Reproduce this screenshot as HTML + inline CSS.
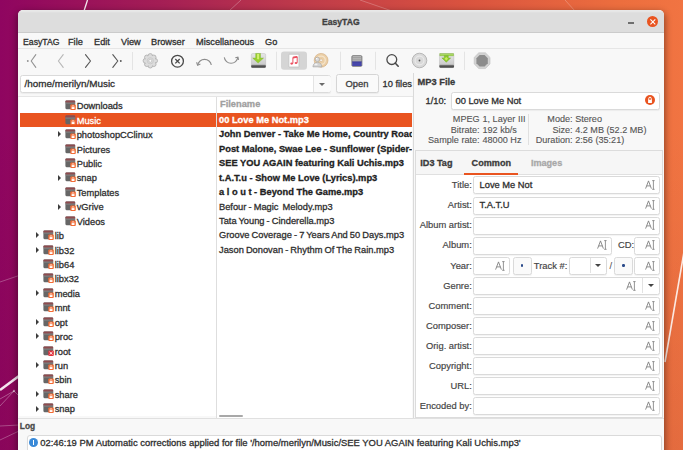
<!DOCTYPE html><html><head><meta charset="utf-8"><style>*{box-sizing:border-box;margin:0;padding:0}
html,body{width:683px;height:450px;overflow:hidden}
body{position:relative;font-family:"Liberation Sans",sans-serif;font-size:9.3px;color:#2f2f2f;-webkit-text-stroke:0.3px currentColor;
background:linear-gradient(180deg,rgba(0,0,0,0) 0,rgba(0,0,0,0) 120px,rgba(60,0,20,.07) 450px),linear-gradient(90deg,#8f0560 0px,#a41e55 160px,#be3a4a 300px,#d9523f 460px,#ec6e3e 620px,#f17442 683px)}
.a{position:absolute}
.t{position:absolute;white-space:pre;line-height:12px}
#win{left:18px;top:10px;width:646px;height:460px;background:#f8f8f8;border-radius:5px 5px 0 0;box-shadow:0 3px 7px 1px rgba(0,0,0,.42)}
#title{left:18px;top:10px;width:646px;height:23px;background:linear-gradient(#e9e9e9 0,#e6e6e6 1.5px,#dddddd 3px,#dddddd 100%);border-radius:5px 5px 0 0;border-bottom:1px solid #cbcbcb}
#menu{left:18px;top:33px;width:646px;height:16px;background:#f8f8f8;border-bottom:1px solid #e6e6e6}
.white{background:#fff}
.b{font-weight:bold;font-size:9.3px;color:#222}
.fl{word-spacing:-0.5px}
.fl.b{word-spacing:0}
.sel{background:#e95420}
.tri{width:0;height:0;border-left:3px solid #3c3c3c;border-top:3px solid transparent;border-bottom:3px solid transparent}
.entry{position:absolute;background:#fff;border:1px solid #dadada;border-radius:2.5px;box-shadow:0 1px 1px rgba(0,0,0,.05)}
.sep{position:absolute;width:1px;background:#dcdcdc}
.lbl{position:absolute;white-space:pre;line-height:12px;text-align:right}
.ai{position:absolute;font-family:"Liberation Serif",serif;font-size:9px;color:#777;line-height:10px;white-space:pre}
</style></head><body>
<svg width="0" height="0" style="position:absolute">
<defs>
<symbol id="fold" viewBox="0 0 11 10">
<rect x="0.4" y="0.6" width="9.8" height="8.6" rx="1.1" fill="#666"/>
<rect x="0.4" y="0.6" width="9.8" height="2.1" rx="1" fill="#8e4b4e"/>
<rect x="0.4" y="2.6" width="9.8" height="0.9" fill="#8a8a8a"/>
<rect x="5.3" y="4.6" width="5.5" height="5.3" rx="1" fill="#f36c35"/>
<rect x="6.6" y="7.1" width="2.9" height="1.9" fill="#fff"/>
<path d="M7.2 7.1 V6.4 a0.85 0.85 0 0 1 1.7 0 V7.1" stroke="#fff" stroke-width="0.6" fill="none"/>
</symbol>
<linearGradient id="dg" x1="0" y1="0" x2="0" y2="1"><stop offset="0" stop-color="#e6e6e6"/><stop offset="1" stop-color="#c4c4c4"/></linearGradient>
<symbol id="foldx" viewBox="0 0 11 10">
<rect x="0.4" y="0.6" width="9.8" height="8.6" rx="1.1" fill="#666"/>
<rect x="0.4" y="0.6" width="9.8" height="2.1" rx="1" fill="#8e4b4e"/>
<rect x="0.4" y="2.6" width="9.8" height="0.9" fill="#8a8a8a"/>
<rect x="5.3" y="4.6" width="5.5" height="5.3" rx="1" fill="#e0303c"/>
<path d="M6.6 5.9 L9.5 8.6 M9.5 5.9 L6.6 8.6" stroke="#fff" stroke-width="0.9"/>
</symbol>
<symbol id="drive" viewBox="0 0 16 16">
<rect x="0.7" y="1" width="14.6" height="14.2" rx="1.6" fill="url(#dg)" stroke="#b4b4b4" stroke-width="0.4"/>
<rect x="0.7" y="12.4" width="14.6" height="2.8" rx="1" fill="#505050"/>
<rect x="1.2" y="12.2" width="13.6" height="0.7" fill="#9a9a9a"/>
<path d="M5.2 0.9 H10 V5.6 H13 L7.6 10.6 L2.2 5.6 H5.2 Z" fill="#98d030" stroke="#78b028" stroke-width="0.4"/>
<path d="M6.6 1.6 H8.6 V6 L7.6 7.2 L6.6 6 Z" fill="#d4f070"/>
</symbol>
<symbol id="drive2" viewBox="0 0 16 16">
<rect x="0.7" y="1" width="14.6" height="14.2" rx="1.6" fill="url(#dg)" stroke="#b4b4b4" stroke-width="0.4"/>
<rect x="0.7" y="12.4" width="14.6" height="2.8" rx="1" fill="#505050"/>
<rect x="1.2" y="12.2" width="13.6" height="0.7" fill="#9a9a9a"/>
<rect x="1.2" y="1.2" width="13.6" height="2.2" fill="#a8d860" stroke="#7ab030" stroke-width="0.4"/>
<path d="M5.6 3.2 H9.6 V5.4 H12 L7.6 9.8 L3.2 5.4 H5.6 Z" fill="#8fcb2c" stroke="#6aa820" stroke-width="0.4"/>
<path d="M7.6 4.4 L9.4 6.2 L7.6 8 L5.8 6.2 Z" fill="#c8ec5a"/>
</symbol>
<symbol id="ai" viewBox="0 0 11 10">
<path d="M0.6 8.6 L3.5 0.9 L6.4 8.6 M1.7 5.9 H5.3" stroke="#7a7a7a" stroke-width="0.85" fill="none"/>
<path d="M8.4 0.6 V9.3 M7.2 0.6 H9.6 M7.2 9.3 H9.6" stroke="#7a7a7a" stroke-width="0.8" fill="none"/>
</symbol>
</defs></svg>
<svg class="a" style="left:0;top:0" width="683" height="450">
<g stroke="#fff" fill="none">
<path d="M87.5 0 L84 11" stroke-width="1.3" opacity=".9"/>
<path d="M241 0 L229 11" stroke-width="0.8" opacity=".35"/>
<path d="M360 0 L392 11" stroke-width="0.8" opacity=".3"/>
<path d="M565 0 L575 11" stroke-width="0.8" opacity=".3"/>
<path d="M0 390 L19 376" stroke-width="2.6" opacity=".9"/>
<path d="M0 399 L14 391 L0 406" stroke-width="0.8" opacity=".4"/>
<path d="M14 391 L19 396" stroke-width="0.8" opacity=".4"/>
<path d="M0 426 L19 425" stroke-width="0.8" opacity=".35"/>
<path d="M0 440 L19 431" stroke-width="0.8" opacity=".35"/>
<path d="M0 282 L19 275.5" stroke-width="0.9" opacity=".3"/>
<path d="M684 252 L665 362" stroke-width="1.6" opacity=".85"/>
</g>
<circle cx="14" cy="391" r="1.2" fill="#fff" opacity=".5"/>
</svg>
<div class="a" id="win"></div>
<div class="a" id="title"></div>
<div class="t b" style="left:322px;top:16px;font-size:8.6px;color:#404040">EasyTAG</div>
<div class="a" style="left:628.2px;top:22.4px;width:5.4px;height:1.3px;background:#6e6e6e"></div>
<div class="a" style="left:646.5px;top:15.5px;width:11.5px;height:11.5px;border-radius:50%;background:#e95420"></div>
<svg class="a" style="left:646.5px;top:15.5px" width="12" height="12"><path d="M3.4 3.4 L8.3 8.3 M8.3 3.4 L3.4 8.3" stroke="#fff" stroke-width="1.05"/></svg>
<div class="a" id="menu"></div>
<div class="t" style="left:23px;top:35.5px;font-size:8.7px">EasyTAG</div>
<div class="t" style="left:68px;top:35.5px;font-size:9.2px">File</div>
<div class="t" style="left:94px;top:35.5px;font-size:9.2px">Edit</div>
<div class="t" style="left:121px;top:35.5px;font-size:9.2px">View</div>
<div class="t" style="left:151px;top:35.5px;font-size:9.2px">Browser</div>
<div class="t" style="left:196px;top:35.5px;font-size:9.2px">Miscellaneous</div>
<div class="t" style="left:265px;top:35.5px;font-size:9.2px">Go</div>

<!-- toolbar -->
<svg class="a" style="left:0;top:0" width="683" height="80">
 <g fill="none" stroke-linecap="round" stroke-linejoin="round">
  <circle cx="27.8" cy="61" r="0.95" fill="#939393" stroke="none"/>
  <path d="M35.8 54.6 L31.2 61 L35.8 67.4" stroke="#939393" stroke-width="1.1"/>
  <path d="M63.2 54.6 L58.4 61 L63.2 67.4" stroke="#b8b8b8" stroke-width="1.15"/>
  <path d="M85.5 54.6 L90.5 61 L85.5 67.4" stroke="#585858" stroke-width="1.15"/>
  <path d="M112.8 54.6 L117.8 61 L112.8 67.4" stroke="#585858" stroke-width="1.15"/>
  <circle cx="120.8" cy="61" r="0.95" fill="#585858" stroke="none"/>
 </g>
 <rect x="132" y="52" width="1" height="18" fill="#e4e4e4"/>
 <g fill="#dcdcdc" stroke="#b2b2b2" stroke-width="0.9"><circle cx="155.20" cy="60.80" r="2.3"/><circle cx="153.76" cy="64.26" r="2.3"/><circle cx="150.30" cy="65.70" r="2.3"/><circle cx="146.84" cy="64.26" r="2.3"/><circle cx="145.40" cy="60.80" r="2.3"/><circle cx="146.84" cy="57.34" r="2.3"/><circle cx="150.30" cy="55.90" r="2.3"/><circle cx="153.76" cy="57.34" r="2.3"/></g>
 <circle cx="150.3" cy="60.8" r="5.1" fill="#dcdcdc"/>
 <circle cx="150.3" cy="60.8" r="3.1" fill="none" stroke="#c6c6c6" stroke-width="0.8"/>
 <circle cx="150.3" cy="60.8" r="1.5" fill="#fbfbfb" stroke="#b2b2b2" stroke-width="0.6"/>
 <circle cx="177.5" cy="61.2" r="5.9" fill="none" stroke="#4a4a4a" stroke-width="1.3"/>
 <path d="M175.3 59 L179.7 63.4 M179.7 59 L175.3 63.4" stroke="#4a4a4a" stroke-width="1.3"/>
 <path d="M197.8 65 A6.8 6.4 0 0 1 211.3 65" fill="none" stroke="#8c8c8c" stroke-width="1.1"/>
 <path d="M196.6 62.3 L197.6 65.2 L200.4 64" fill="none" stroke="#8c8c8c" stroke-width="1.1"/>
 <path d="M224.3 57.4 A6.8 6.6 0 0 0 237.8 57.4" fill="none" stroke="#8c8c8c" stroke-width="1.1"/>
 <path d="M235.3 57.8 L237.9 57.1 L238.6 59.9" fill="none" stroke="#8c8c8c" stroke-width="1.1"/>
 <svg x="250.5" y="52.5" width="16" height="16" viewBox="0 0 16 16"><use href="#drive"/></svg>
 <rect x="276" y="51.7" width="1" height="18.3" fill="#e4e4e4"/>
 <rect x="281" y="51.6" width="26" height="18.2" rx="3" fill="#d5d5d5"/>
 <rect x="288.8" y="54.2" width="10.2" height="12.9" rx="0.6" fill="#fff" stroke="#d0d0d0" stroke-width="0.5"/>
 <path d="M292.9 63.4 V57.5 L297.2 56.8 V62.8" fill="none" stroke="#ea5060" stroke-width="1"/>
 <path d="M292.9 57.6 L297.2 56.9" stroke="#ea5060" stroke-width="1.6"/>
 <ellipse cx="291.7" cy="63.6" rx="1.4" ry="1.1" fill="#ea5060"/>
 <ellipse cx="296" cy="63" rx="1.4" ry="1.1" fill="#ea5060"/>
 <circle cx="321.1" cy="60.3" r="6.9" fill="#ebcfa6" stroke="#d2aa7c" stroke-width="0.6"/>
 <circle cx="321.1" cy="60.3" r="4.2" fill="none" stroke="#f5e4cc" stroke-width="1.3"/>
 <circle cx="321.1" cy="60.3" r="1.3" fill="#f6f6f6" stroke="#c9a070" stroke-width="0.4"/>
 <circle cx="317.4" cy="59.4" r="2.2" fill="#dadada" stroke="#9c9c9c" stroke-width="0.55"/>
 <path d="M312.9 66.9 Q313.1 62.7 317.4 62.4 Q321.7 62.7 321.9 66.9 Z" fill="#d2d2d2" stroke="#9c9c9c" stroke-width="0.55"/>
 <ellipse cx="316.6" cy="58.7" rx="0.8" ry="0.6" fill="#fff"/>
 <ellipse cx="316" cy="64.4" rx="1.6" ry="0.9" fill="#f2f2f2"/>
 <rect x="288.8" y="54.2" width="10.2" height="12.9" rx="0.6" fill="none" stroke="#bdbdbd" stroke-width="0.6"/>
 <rect x="340" y="51.7" width="1" height="18.3" fill="#e4e4e4"/>
 <rect x="351.9" y="55.7" width="10" height="10.6" rx="1" fill="#c4c4c4" stroke="#4e4e4e" stroke-width="0.7"/>
 <rect x="352.3" y="57.4" width="9.2" height="0.9" fill="#8a8a8a"/>
 <rect x="352.3" y="59.5" width="9.2" height="0.9" fill="#8a8a8a"/>
 <rect x="352.2" y="61.6" width="9.4" height="4.4" fill="#4646aa"/>
 <rect x="352.2" y="61.6" width="9.4" height="0.6" fill="#2e2e80"/>
 <rect x="375" y="51.8" width="1" height="18" fill="#e4e4e4"/>
 <circle cx="391.8" cy="59.6" r="4.9" fill="none" stroke="#4a4a4a" stroke-width="1.3"/>
 <path d="M395.4 63.2 L398.2 66.2" stroke="#4a4a4a" stroke-width="1.6" stroke-linecap="round"/>
 <circle cx="419.5" cy="60.5" r="7.3" fill="#d9d9d9" stroke="#a9a9a9" stroke-width="0.8"/>
 <circle cx="419.5" cy="60.5" r="4.4" fill="none" stroke="#e9e9e9" stroke-width="1.2"/>
 <circle cx="419.5" cy="60.5" r="0.9" fill="#555"/>
 <svg x="438.7" y="52.5" width="16" height="16" viewBox="0 0 16 16"><use href="#drive2"/></svg>
 <rect x="464" y="51.7" width="1" height="18.3" fill="#e4e4e4"/>
 <path d="M478.8 52.8 H485.4 L490 57.4 V64 L485.4 68.6 H478.8 L474.2 64 V57.4 Z" fill="#d2d2d2" stroke="#bdbdbd" stroke-width="0.6"/>
 <path d="M479.6 55 H484.6 L487.8 58.2 V63.2 L484.6 66.4 H479.6 L476.4 63.2 V58.2 Z" fill="#8c8c8c"/>
</svg>
<!-- path row -->
<div class="entry" style="left:20px;top:74.5px;width:311px;height:18px;border-radius:2.5px"></div>
<div class="a" style="left:312.5px;top:75.5px;width:18px;height:16px;background:#fafafa;border-left:1px solid #e4e4e4;border-radius:0 2px 2px 0"></div>
<div class="a" style="left:319px;top:82.5px;width:0;height:0;border-top:3px solid #6a6a6a;border-left:3px solid transparent;border-right:3px solid transparent"></div>
<div class="t" style="left:24.5px;top:77.5px;font-size:9.9px">/home/merilyn/Music</div>
<div class="entry" style="left:335.5px;top:74px;width:43px;height:18.5px;background:#fafafa;border-color:#d5d5d5"></div>
<div class="t" style="left:345.5px;top:77.5px;font-size:9.4px;color:#404040">Open</div>
<div class="t" style="left:382.5px;top:77.5px">10 files</div>
<div class="a" style="left:18px;top:96px;width:395px;height:1px;background:#e6e6e6"></div>

<div class="a white" style="left:19px;top:97px;width:197px;height:319px;overflow:hidden">
<svg class="a" style="left:46.2px;top:3.30px" width="11" height="10"><use href="#fold"/></svg>
<div class="t" style="left:57.7px;top:3.30px;">Downloads</div>
<div class="a sel" style="left:1px;top:15.58px;width:197px;height:14.3px"></div>
<svg class="a" style="left:46.2px;top:17.73px" width="11" height="10"><use href="#fold"/></svg>
<div class="t" style="left:57.7px;top:17.73px;color:#fff">Music</div>
<div class="a tri" style="left:39.3px;top:34.36px"></div>
<svg class="a" style="left:46.2px;top:32.16px" width="11" height="10"><use href="#fold"/></svg>
<div class="t" style="left:57.7px;top:32.16px;">photoshopCClinux</div>
<svg class="a" style="left:46.2px;top:46.59px" width="11" height="10"><use href="#fold"/></svg>
<div class="t" style="left:57.7px;top:46.59px;">Pictures</div>
<svg class="a" style="left:46.2px;top:61.02px" width="11" height="10"><use href="#fold"/></svg>
<div class="t" style="left:57.7px;top:61.02px;">Public</div>
<div class="a tri" style="left:39.3px;top:77.65px"></div>
<svg class="a" style="left:46.2px;top:75.45px" width="11" height="10"><use href="#fold"/></svg>
<div class="t" style="left:57.7px;top:75.45px;">snap</div>
<svg class="a" style="left:46.2px;top:89.88px" width="11" height="10"><use href="#fold"/></svg>
<div class="t" style="left:57.7px;top:89.88px;">Templates</div>
<div class="a tri" style="left:39.3px;top:106.51px"></div>
<svg class="a" style="left:46.2px;top:104.31px" width="11" height="10"><use href="#fold"/></svg>
<div class="t" style="left:57.7px;top:104.31px;">vGrive</div>
<svg class="a" style="left:46.2px;top:118.74px" width="11" height="10"><use href="#fold"/></svg>
<div class="t" style="left:57.7px;top:118.74px;">Videos</div>
<div class="a tri" style="left:16.5px;top:135.37px"></div>
<svg class="a" style="left:24.2px;top:133.17px" width="11" height="10"><use href="#fold"/></svg>
<div class="t" style="left:35.7px;top:133.17px;">lib</div>
<div class="a tri" style="left:16.5px;top:149.80px"></div>
<svg class="a" style="left:24.2px;top:147.60px" width="11" height="10"><use href="#fold"/></svg>
<div class="t" style="left:35.7px;top:147.60px;">lib32</div>
<svg class="a" style="left:24.2px;top:162.03px" width="11" height="10"><use href="#fold"/></svg>
<div class="t" style="left:35.7px;top:162.03px;">lib64</div>
<svg class="a" style="left:24.2px;top:176.46px" width="11" height="10"><use href="#fold"/></svg>
<div class="t" style="left:35.7px;top:176.46px;">libx32</div>
<div class="a tri" style="left:16.5px;top:193.09px"></div>
<svg class="a" style="left:24.2px;top:190.89px" width="11" height="10"><use href="#fold"/></svg>
<div class="t" style="left:35.7px;top:190.89px;">media</div>
<svg class="a" style="left:24.2px;top:205.32px" width="11" height="10"><use href="#fold"/></svg>
<div class="t" style="left:35.7px;top:205.32px;">mnt</div>
<div class="a tri" style="left:16.5px;top:221.95px"></div>
<svg class="a" style="left:24.2px;top:219.75px" width="11" height="10"><use href="#fold"/></svg>
<div class="t" style="left:35.7px;top:219.75px;">opt</div>
<div class="a tri" style="left:16.5px;top:236.38px"></div>
<svg class="a" style="left:24.2px;top:234.18px" width="11" height="10"><use href="#fold"/></svg>
<div class="t" style="left:35.7px;top:234.18px;">proc</div>
<svg class="a" style="left:24.2px;top:248.61px" width="11" height="10"><use href="#foldx"/></svg>
<div class="t" style="left:35.7px;top:248.61px;">root</div>
<div class="a tri" style="left:16.5px;top:265.24px"></div>
<svg class="a" style="left:24.2px;top:263.04px" width="11" height="10"><use href="#fold"/></svg>
<div class="t" style="left:35.7px;top:263.04px;">run</div>
<svg class="a" style="left:24.2px;top:277.47px" width="11" height="10"><use href="#fold"/></svg>
<div class="t" style="left:35.7px;top:277.47px;">sbin</div>
<div class="a tri" style="left:16.5px;top:294.10px"></div>
<svg class="a" style="left:24.2px;top:291.90px" width="11" height="10"><use href="#fold"/></svg>
<div class="t" style="left:35.7px;top:291.90px;">share</div>
<div class="a tri" style="left:16.5px;top:308.53px"></div>
<svg class="a" style="left:24.2px;top:306.33px" width="11" height="10"><use href="#fold"/></svg>
<div class="t" style="left:35.7px;top:306.33px;">snap</div>
</div>
<div class="a white" style="left:217px;top:97px;width:195px;height:321px;overflow:hidden">
<div class="t b" style="left:3px;top:0.8px;color:#a0a0a0">Filename</div>
<div class="a sel" style="left:0;top:15.58px;width:195px;height:14.3px"></div>
<div class="t fl b" style="left:2px;top:17.03px;color:#fff">00 Love Me Not.mp3</div>
<div class="t fl b" style="left:2px;top:31.46px;">John Denver - Take Me Home, Country Roads</div>
<div class="t fl b" style="left:2px;top:45.89px;">Post Malone, Swae Lee - Sunflower (Spider-Man Into the Spider-Verse).mp3</div>
<div class="t fl b" style="left:2px;top:60.32px;">SEE YOU AGAIN featuring Kali Uchis.mp3</div>
<div class="t fl b" style="left:2px;top:74.75px;">t.A.T.u - Show Me Love (Lyrics).mp3</div>
<div class="t fl b" style="left:2px;top:89.18px;">a l o u t - Beyond The Game.mp3</div>
<div class="t fl" style="left:2px;top:103.61px;">Befour - Magic  Melody.mp3</div>
<div class="t fl" style="left:2px;top:118.04px;">Tata Young - Cinderella.mp3</div>
<div class="t fl" style="left:2px;top:132.47px;">Groove Coverage - 7 Years And 50 Days.mp3</div>
<div class="t fl" style="left:2px;top:146.90px;">Jason Donovan - Rhythm Of The Rain.mp3</div>
<div class="a" style="left:2px;top:318px;width:24px;height:2px;background:#a8a8a8;border-radius:1px"></div>
</div>
<div class="a" style="left:413px;top:73px;width:1px;height:346px;background:#dadada"></div>
<div class="a" style="left:216px;top:97px;width:1px;height:321px;background:#dedede"></div>
<div class="t b" style="left:417.5px;top:76px;color:#3a3a3a">MP3 File</div>
<div class="t" style="left:425.5px;top:94.5px;font-size:9.3px">1/10:</div>
<div class="entry" style="left:450.5px;top:91.5px;width:209px;height:18px"></div>
<div class="t" style="left:455.5px;top:94.5px">00 Love Me Not</div>
<div class="a" style="left:644.6px;top:95px;width:10px;height:10px;border-radius:50%;background:#e95420"></div>
<svg class="a" style="left:644.6px;top:95px" width="10" height="10"><rect x="3.1" y="4.9" width="3.8" height="3.1" fill="#fff"/><path d="M3.75 5 V3.6 a1.25 1.4 0 0 1 2.5 0 V5" stroke="#fff" stroke-width="1" fill="none"/></svg>
<div class="lbl" style="left:379.6px;width:100px;top:113.1px;color:#555;font-size:9.1px;-webkit-text-stroke:0.12px #555">MPEG</div>
<div class="t" style="left:482.5px;top:113.1px;color:#555;font-size:9.1px;-webkit-text-stroke:0.12px #555">1, Layer III</div>
<div class="lbl" style="left:472.6px;width:100px;top:113.1px;color:#555;font-size:9.1px;-webkit-text-stroke:0.12px #555">Mode:</div>
<div class="t" style="left:575.2px;top:113.1px;color:#555;font-size:9.1px;-webkit-text-stroke:0.12px #555">Stereo</div>
<div class="lbl" style="left:379.6px;width:100px;top:123.7px;color:#555;font-size:9.1px;-webkit-text-stroke:0.12px #555">Bitrate:</div>
<div class="t" style="left:482.5px;top:123.7px;color:#555;font-size:9.1px;-webkit-text-stroke:0.12px #555">192 kb/s</div>
<div class="lbl" style="left:472.6px;width:100px;top:123.7px;color:#555;font-size:9.1px;-webkit-text-stroke:0.12px #555">Size:</div>
<div class="t" style="left:575.2px;top:123.7px;color:#555;font-size:9.1px;-webkit-text-stroke:0.12px #555">4.2 MB (52.2 MB)</div>
<div class="lbl" style="left:379.6px;width:100px;top:134.3px;color:#555;font-size:9.1px;-webkit-text-stroke:0.12px #555">Sample rate:</div>
<div class="t" style="left:482.5px;top:134.3px;color:#555;font-size:9.1px;-webkit-text-stroke:0.12px #555">48000 Hz</div>
<div class="lbl" style="left:472.6px;width:100px;top:134.3px;color:#555;font-size:9.1px;-webkit-text-stroke:0.12px #555">Duration:</div>
<div class="t" style="left:575.2px;top:134.3px;color:#555;font-size:9.1px;-webkit-text-stroke:0.12px #555">2:56 (35:21)</div>
<div class="a" style="left:527.5px;top:114px;width:1px;height:31px;background:#e0e0e0"></div>
<div class="a" style="left:415px;top:150px;width:247.5px;height:268px;border:1px solid #dcdcdc;background:#fff"></div>
<div class="a" style="left:416px;top:151px;width:245.5px;height:24px;background:#f6f6f6;border-bottom:1px solid #e0e0e0"></div>
<div class="t b" style="left:420.3px;top:157px;color:#3a3a3a;font-size:9.1px">ID3 Tag</div>
<div class="t b" style="left:471.6px;top:157px;color:#3a3a3a;font-size:9.1px">Common</div>
<div class="t b" style="left:530.9px;top:157px;color:#a8a8a8;font-size:9.1px">Images</div>
<div class="a" style="left:464.2px;top:173px;width:53.8px;height:2px;background:#e95420"></div>
<div class="lbl" style="left:371.8px;width:100px;top:179.2px;font-size:9.4px;color:#454545;-webkit-text-stroke:0.18px #454545">Title:</div>
<div class="entry" style="left:473.4px;top:176.4px;width:186.7px;height:18px"></div>
<svg class="a" style="left:644.6px;top:180.2px" width="11" height="10"><use href="#ai"/></svg>
<div class="lbl" style="left:371.8px;width:100px;top:199.3px;font-size:9.4px;color:#454545;-webkit-text-stroke:0.18px #454545">Artist:</div>
<div class="entry" style="left:473.4px;top:196.5px;width:186.7px;height:18px"></div>
<svg class="a" style="left:644.6px;top:200.3px" width="11" height="10"><use href="#ai"/></svg>
<div class="lbl" style="left:371.8px;width:100px;top:219.3px;font-size:9.4px;color:#454545;-webkit-text-stroke:0.18px #454545">Album artist:</div>
<div class="entry" style="left:473.4px;top:216.5px;width:186.7px;height:18px"></div>
<svg class="a" style="left:644.6px;top:220.3px" width="11" height="10"><use href="#ai"/></svg>
<div class="lbl" style="left:371.8px;width:100px;top:239.4px;font-size:9.4px;color:#454545;-webkit-text-stroke:0.18px #454545">Album:</div>
<div class="entry" style="left:473.4px;top:236.6px;width:139.1px;height:18px"></div>
<svg class="a" style="left:597.0px;top:240.4px" width="11" height="10"><use href="#ai"/></svg>
<div class="t" style="left:618px;top:239.4px;font-size:9.4px;color:#454545;-webkit-text-stroke:0.18px #454545">CD:</div>
<div class="entry" style="left:634.4px;top:236.6px;width:25.6px;height:18px"></div>
<svg class="a" style="left:644.5px;top:240.4px" width="11" height="10"><use href="#ai"/></svg>
<div class="lbl" style="left:371.8px;width:100px;top:259.5px;font-size:9.4px;color:#454545;-webkit-text-stroke:0.18px #454545">Year:</div>
<div class="entry" style="left:473.4px;top:256.7px;width:36.6px;height:18px"></div>
<svg class="a" style="left:494.5px;top:260.5px" width="11" height="10"><use href="#ai"/></svg>
<div class="entry" style="left:512.6px;top:256.7px;width:19.4px;height:18px;background:#fafafa"></div>
<div class="a" style="left:521px;top:264.3px;width:2.4px;height:2.4px;border-radius:50%;background:#2a4a8a"></div>
<div class="t" style="left:533.8px;top:259.5px;font-size:9.4px;color:#454545;-webkit-text-stroke:0.18px #454545">Track #:</div>
<div class="entry" style="left:568.6px;top:256.7px;width:38.4px;height:18px"></div>
<div class="a" style="left:589.5px;top:257.7px;width:1px;height:15.5px;background:#e2e2e2"></div>
<div class="a" style="left:595.3px;top:264.3px;width:0;height:0;border-top:3px solid #444;border-left:3px solid transparent;border-right:3px solid transparent"></div>
<div class="t" style="left:609.5px;top:259.5px;font-size:9.4px;color:#555;-webkit-text-stroke:0.1px #555">/</div>
<div class="entry" style="left:614.3px;top:256.7px;width:18.3px;height:18px;background:#fafafa"></div>
<div class="a" style="left:622.3px;top:264.3px;width:2.4px;height:2.4px;border-radius:50%;background:#2a4a8a"></div>
<div class="entry" style="left:634.4px;top:256.7px;width:25.6px;height:18px"></div>
<svg class="a" style="left:644.5px;top:260.5px" width="11" height="10"><use href="#ai"/></svg>
<div class="lbl" style="left:371.8px;width:100px;top:279.5px;font-size:9.4px;color:#454545;-webkit-text-stroke:0.18px #454545">Genre:</div>
<div class="entry" style="left:473.4px;top:276.7px;width:186.6px;height:18px"></div>
<div class="a" style="left:641.5px;top:277.7px;width:1px;height:15.5px;background:#e2e2e2"></div>
<svg class="a" style="left:626px;top:280.5px" width="11" height="10"><use href="#ai"/></svg>
<div class="a" style="left:647.8px;top:284.3px;width:0;height:0;border-top:3px solid #444;border-left:3px solid transparent;border-right:3px solid transparent"></div>
<div class="lbl" style="left:371.8px;width:100px;top:299.6px;font-size:9.4px;color:#454545;-webkit-text-stroke:0.18px #454545">Comment:</div>
<div class="entry" style="left:473.4px;top:296.8px;width:186.7px;height:18px"></div>
<svg class="a" style="left:644.6px;top:300.6px" width="11" height="10"><use href="#ai"/></svg>
<div class="lbl" style="left:371.8px;width:100px;top:319.7px;font-size:9.4px;color:#454545;-webkit-text-stroke:0.18px #454545">Composer:</div>
<div class="entry" style="left:473.4px;top:316.9px;width:186.7px;height:18px"></div>
<svg class="a" style="left:644.6px;top:320.7px" width="11" height="10"><use href="#ai"/></svg>
<div class="lbl" style="left:371.8px;width:100px;top:339.8px;font-size:9.4px;color:#454545;-webkit-text-stroke:0.18px #454545">Orig. artist:</div>
<div class="entry" style="left:473.4px;top:337.0px;width:186.7px;height:18px"></div>
<svg class="a" style="left:644.6px;top:340.8px" width="11" height="10"><use href="#ai"/></svg>
<div class="lbl" style="left:371.8px;width:100px;top:359.8px;font-size:9.4px;color:#454545;-webkit-text-stroke:0.18px #454545">Copyright:</div>
<div class="entry" style="left:473.4px;top:357.0px;width:186.7px;height:18px"></div>
<svg class="a" style="left:644.6px;top:360.8px" width="11" height="10"><use href="#ai"/></svg>
<div class="lbl" style="left:371.8px;width:100px;top:379.9px;font-size:9.4px;color:#454545;-webkit-text-stroke:0.18px #454545">URL:</div>
<div class="entry" style="left:473.4px;top:377.1px;width:186.7px;height:18px"></div>
<svg class="a" style="left:644.6px;top:380.9px" width="11" height="10"><use href="#ai"/></svg>
<div class="lbl" style="left:371.8px;width:100px;top:400.0px;font-size:9.4px;color:#454545;-webkit-text-stroke:0.18px #454545">Encoded by:</div>
<div class="entry" style="left:473.4px;top:397.2px;width:186.7px;height:18px"></div>
<svg class="a" style="left:644.6px;top:401.0px" width="11" height="10"><use href="#ai"/></svg>
<div class="t" style="left:479.6px;top:179.2px">Love Me Not</div>
<div class="t" style="left:479.6px;top:199.3px">T.A.T.U</div>
<div class="a" style="left:18px;top:418px;width:646px;height:1px;background:#e0e0e0"></div>
<div class="t b" style="left:19.8px;top:420.3px;color:#4a4a4a;font-size:8.4px">Log</div>
<div class="entry" style="left:26.7px;top:434.5px;width:635px;height:30px;border-radius:3px"></div>
<div class="a" style="left:29px;top:437.6px;width:9.4px;height:9.4px;border-radius:50%;background:#3a8ad8"></div>
<div class="a" style="left:33.1px;top:441.4px;width:1.2px;height:4px;background:#fff"></div>
<div class="a" style="left:33.1px;top:439.5px;width:1.2px;height:1.2px;background:#fff"></div>
<div class="t" style="left:40.2px;top:437px;font-size:9.44px">02:46:19 PM Automatic corrections applied for file '/home/merilyn/Music/SEE YOU AGAIN featuring Kali Uchis.mp3'</div>
</body></html>
